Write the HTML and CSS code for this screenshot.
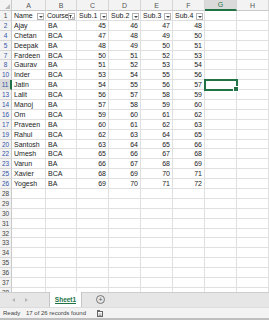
FILE: index.html
```html
<!DOCTYPE html>
<html lang="en">
<head>
    <meta charset="UTF-8">
    <meta name="viewport" content="width=device-width, initial-scale=1.0">
    <title>Sheet1</title>
    <link rel="stylesheet" href="styles.css">
</head>
<body>
    <div class="app">
        <div class="sheet">
            <div class="row">
                <div class="corner"></div>
                <div class="ch">A</div>
                <div class="ch">B</div>
                <div class="ch">C</div>
                <div class="ch">D</div>
                <div class="ch">E</div>
                <div class="ch">F</div>
                <div class="ch active">G</div>
                <div class="ch">H</div>
            </div>
            <div class="row">
                <div class="rh plain">1</div>
                <div class="c">Name<span class="dd"><i class="tri"></i></span></div>
                <div class="c tight">Course<span class="dd">
                    <svg width="6" height="6" viewBox="0 0 6 6"><path d="M0 0.5h3.6l-1.3 1.6v2.2l-1 0.6v-2.8z" fill="#333"/><path d="M3.6 3.6h2.2l-1.1 1.4z" fill="#333"/></svg>
                </span></div>
                <div class="c">Sub.1<span class="dd"><i class="tri"></i></span></div>
                <div class="c">Sub.2<span class="dd"><i class="tri"></i></span></div>
                <div class="c">Sub.3<span class="dd"><i class="tri"></i></span></div>
                <div class="c">Sub.4<span class="dd"><i class="tri"></i></span></div>
                <div class="c"></div>
                <div class="c"></div>
            </div>
            <div class="row">
                <div class="rh">2</div><div class="c">Ajay</div><div class="c">BA</div>
                <div class="c n">45</div><div class="c n">46</div><div class="c n">47</div><div class="c n">48</div>
                <div class="c"></div><div class="c"></div>
            </div>
            <div class="row">
                <div class="rh">4</div><div class="c">Chetan</div><div class="c">BCA</div>
                <div class="c n">47</div><div class="c n">48</div><div class="c n">49</div><div class="c n">50</div>
                <div class="c"></div><div class="c"></div>
            </div>
            <div class="row">
                <div class="rh">5</div><div class="c">Deepak</div><div class="c">BA</div>
                <div class="c n">48</div><div class="c n">49</div><div class="c n">50</div><div class="c n">51</div>
                <div class="c"></div><div class="c"></div>
            </div>
            <div class="row">
                <div class="rh">7</div><div class="c">Fardeen</div><div class="c">BCA</div>
                <div class="c n">50</div><div class="c n">51</div><div class="c n">52</div><div class="c n">53</div>
                <div class="c"></div><div class="c"></div>
            </div>
            <div class="row">
                <div class="rh">8</div><div class="c">Gaurav</div><div class="c">BA</div>
                <div class="c n">51</div><div class="c n">52</div><div class="c n">53</div><div class="c n">54</div>
                <div class="c"></div><div class="c"></div>
            </div>
            <div class="row">
                <div class="rh">10</div><div class="c">Inder</div><div class="c">BCA</div>
                <div class="c n">53</div><div class="c n">54</div><div class="c n">55</div><div class="c n">56</div>
                <div class="c"></div><div class="c"></div>
            </div>
            <div class="row">
                <div class="rh active">11</div><div class="c">Jatin</div><div class="c">BA</div>
                <div class="c n">54</div><div class="c n">55</div><div class="c n">56</div><div class="c n">57</div>
                <div class="c sel"></div><div class="c"></div>
            </div>
            <div class="row">
                <div class="rh">13</div><div class="c">Lalit</div><div class="c">BCA</div>
                <div class="c n">56</div><div class="c n">57</div><div class="c n">58</div><div class="c n">59</div>
                <div class="c"></div><div class="c"></div>
            </div>
            <div class="row">
                <div class="rh">14</div><div class="c">Manoj</div><div class="c">BA</div>
                <div class="c n">57</div><div class="c n">58</div><div class="c n">59</div><div class="c n">60</div>
                <div class="c"></div><div class="c"></div>
            </div>
            <div class="row">
                <div class="rh">16</div><div class="c">Om</div><div class="c">BCA</div>
                <div class="c n">59</div><div class="c n">60</div><div class="c n">61</div><div class="c n">62</div>
                <div class="c"></div><div class="c"></div>
            </div>
            <div class="row">
                <div class="rh">17</div><div class="c">Praveen</div><div class="c">BA</div>
                <div class="c n">60</div><div class="c n">61</div><div class="c n">62</div><div class="c n">63</div>
                <div class="c"></div><div class="c"></div>
            </div>
            <div class="row">
                <div class="rh">19</div><div class="c">Rahul</div><div class="c">BCA</div>
                <div class="c n">62</div><div class="c n">63</div><div class="c n">64</div><div class="c n">65</div>
                <div class="c"></div><div class="c"></div>
            </div>
            <div class="row">
                <div class="rh">20</div><div class="c">Santosh</div><div class="c">BA</div>
                <div class="c n">63</div><div class="c n">64</div><div class="c n">65</div><div class="c n">66</div>
                <div class="c"></div><div class="c"></div>
            </div>
            <div class="row">
                <div class="rh">22</div><div class="c">Umesh</div><div class="c">BCA</div>
                <div class="c n">65</div><div class="c n">66</div><div class="c n">67</div><div class="c n">68</div>
                <div class="c"></div><div class="c"></div>
            </div>
            <div class="row">
                <div class="rh">23</div><div class="c">Varun</div><div class="c">BA</div>
                <div class="c n">66</div><div class="c n">67</div><div class="c n">68</div><div class="c n">69</div>
                <div class="c"></div><div class="c"></div>
            </div>
            <div class="row">
                <div class="rh">25</div><div class="c">Xavier</div><div class="c">BCA</div>
                <div class="c n">68</div><div class="c n">69</div><div class="c n">70</div><div class="c n">71</div>
                <div class="c"></div><div class="c"></div>
            </div>
            <div class="row">
                <div class="rh">26</div><div class="c">Yogesh</div><div class="c">BA</div>
                <div class="c n">69</div><div class="c n">70</div><div class="c n">71</div><div class="c n">72</div>
                <div class="c"></div><div class="c"></div>
            </div>
            <div class="row">
                <div class="rh plain">28</div><div class="c"></div><div class="c"></div><div class="c"></div><div class="c"></div><div class="c"></div><div class="c"></div><div class="c"></div><div class="c"></div>
            </div>
            <div class="row">
                <div class="rh plain">29</div><div class="c"></div><div class="c"></div><div class="c"></div><div class="c"></div><div class="c"></div><div class="c"></div><div class="c"></div><div class="c"></div>
            </div>
            <div class="row">
                <div class="rh plain">30</div><div class="c"></div><div class="c"></div><div class="c"></div><div class="c"></div><div class="c"></div><div class="c"></div><div class="c"></div><div class="c"></div>
            </div>
            <div class="row">
                <div class="rh plain">31</div><div class="c"></div><div class="c"></div><div class="c"></div><div class="c"></div><div class="c"></div><div class="c"></div><div class="c"></div><div class="c"></div>
            </div>
            <div class="row">
                <div class="rh plain">32</div><div class="c"></div><div class="c"></div><div class="c"></div><div class="c"></div><div class="c"></div><div class="c"></div><div class="c"></div><div class="c"></div>
            </div>
            <div class="row">
                <div class="rh plain">33</div><div class="c"></div><div class="c"></div><div class="c"></div><div class="c"></div><div class="c"></div><div class="c"></div><div class="c"></div><div class="c"></div>
            </div>
            <div class="row">
                <div class="rh plain">34</div><div class="c"></div><div class="c"></div><div class="c"></div><div class="c"></div><div class="c"></div><div class="c"></div><div class="c"></div><div class="c"></div>
            </div>
            <div class="row">
                <div class="rh plain">35</div><div class="c"></div><div class="c"></div><div class="c"></div><div class="c"></div><div class="c"></div><div class="c"></div><div class="c"></div><div class="c"></div>
            </div>
            <div class="row">
                <div class="rh plain">36</div><div class="c"></div><div class="c"></div><div class="c"></div><div class="c"></div><div class="c"></div><div class="c"></div><div class="c"></div><div class="c"></div>
            </div>
            <div class="row">
                <div class="rh plain">37</div><div class="c"></div><div class="c"></div><div class="c"></div><div class="c"></div><div class="c"></div><div class="c"></div><div class="c"></div><div class="c"></div>
            </div>
            <div class="row">
                <div class="rh plain last">38</div><div class="c"></div><div class="c"></div><div class="c"></div><div class="c"></div><div class="c"></div><div class="c"></div><div class="c"></div><div class="c"></div>
            </div>
        </div>

        <div class="tabs">
            <div class="nav">
                <i class="arrow left"></i>
                <i class="arrow right"></i>
            </div>
            <div class="tab"><span>Sheet1</span></div>
            <div class="add">+</div>
        </div>

        <div class="status">
            <span class="ready">Ready</span>
            <span>17 of 26 records found</span>
            <svg class="macro" width="6" height="7" viewBox="0 0 6 7">
                <rect x="0.5" y="1.5" width="5" height="5" fill="#fff" stroke="#666"/>
                <rect x="0" y="0" width="3" height="2" fill="#666"/>
                <path d="M1.5 4h3M1.5 5.5h3" stroke="#999"/>
            </svg>
        </div>
    </div>
</body>
</html>
```

FILE: styles.css
```css
* {
    box-sizing: border-box;
}

html, body {
    margin: 0;
    padding: 0;
}

body {
    width: 269px;
    height: 320px;
    overflow: hidden;
    background-color: #fff;
    font-family: "Liberation Sans", Arial, sans-serif;
}

.app {
    display: flex;
    flex-direction: column;
    height: 320px;
}

/* grid */
.sheet {
    height: 292px;
    flex: none;
    overflow: hidden;
    display: grid;
    grid-template-columns: 12px 34px 31px 32px 32px 32px 32px 32px 32px;
    grid-template-rows: 11px;
    grid-auto-rows: 9.9px;
}

.row {
    display: contents;
}

.c {
    position: relative;
    display: flex;
    align-items: center;
    padding: 0 2px 0 2px;
    border-right: 1px solid #e0e0e0;
    border-bottom: 1px solid #e0e0e0;
    font-size: 7px;
    color: #222;
    white-space: nowrap;
    overflow: hidden;
}

.c.n {
    justify-content: flex-end;
}

.c.tight {
    padding-left: 1px;
    letter-spacing: -0.2px;
}

/* column + row headers */
.corner {
    position: relative;
    background-color: #f3f3f3;
    border-right: 1px solid #c9c9c9;
    border-bottom: 1px solid #c9c9c9;
}

.corner::after {
    content: "";
    position: absolute;
    right: 1px;
    bottom: 1px;
    border-left: 5px solid transparent;
    border-bottom: 5px solid #b9b9b9;
}

.ch {
    display: flex;
    align-items: center;
    justify-content: center;
    background-color: #f3f3f3;
    border-right: 1px solid #d6d6d6;
    border-bottom: 1px solid #c9c9c9;
    font-size: 7px;
    color: #555;
}

.ch.active {
    background-color: #dadada;
    color: #217346;
    border-bottom: 2px solid #217346;
}

.rh {
    display: flex;
    align-items: center;
    justify-content: center;
    background-color: #f3f3f3;
    border-right: 1px solid #c9c9c9;
    border-bottom: 1px solid #d6d6d6;
    font-size: 6.5px;
    color: #3555a8;
}

.rh.plain {
    color: #444;
}

.rh.last {
    align-items: flex-start;
    padding-top: 1px;
}

.rh.active {
    background-color: #dadada;
    border-right: 2px solid #217346;
}

/* filter buttons */
.dd {
    position: absolute;
    right: 1px;
    top: 2px;
    width: 7px;
    height: 7px;
    display: flex;
    align-items: center;
    justify-content: center;
    background-color: #fff;
    border: 1px solid #b3b3b3;
}

.tri {
    border-left: 2px solid transparent;
    border-right: 2px solid transparent;
    border-top: 2px solid #444;
}

/* active cell */
.c.sel {
    overflow: visible;
    z-index: 1;
    outline: 2px solid #217346;
    outline-offset: -1px;
}

.c.sel::after {
    content: "";
    position: absolute;
    right: -3px;
    bottom: -3px;
    width: 4px;
    height: 4px;
    background-color: #217346;
    border: 1px solid #fff;
}

/* sheet tabs */
.tabs {
    flex: none;
    height: 15px;
    display: flex;
    background-color: #e6e6e6;
    border-top: 1px solid #cdcdcd;
}

.nav {
    width: 50px;
    display: flex;
    align-items: center;
    gap: 10px;
    padding-left: 12px;
}

.arrow {
    border-top: 2px solid transparent;
    border-bottom: 2px solid transparent;
}

.arrow.left {
    border-right: 3px solid #b5b5b5;
}

.arrow.right {
    border-left: 3px solid #b5b5b5;
}

.tab {
    width: 31px;
    margin-top: -1px;
    display: flex;
    align-items: center;
    justify-content: center;
    background-color: #fff;
    box-shadow: 1px 0 0 #c6c6c6, -1px 0 0 #c6c6c6;
    color: #217346;
    font-size: 6.5px;
    font-weight: bold;
}

.tab span {
    border-bottom: 1px solid #217346;
    line-height: 7px;
    padding-top: 1px;
}

.add {
    width: 9px;
    height: 9px;
    margin: 2px 0 0 15px;
    border: 1px solid #777;
    border-radius: 50%;
    display: flex;
    align-items: center;
    justify-content: center;
    font-size: 7px;
    line-height: 7px;
    color: #555;
}

/* status bar */
.status {
    flex: none;
    height: 13px;
    display: flex;
    align-items: center;
    padding-left: 3px;
    background-color: #f3f3f3;
    border-top: 1px solid #dcdcdc;
    border-bottom: 2px solid #bfbfbf;
    font-size: 6px;
    color: #444;
}

.ready {
    width: 23px;
}

.macro {
    margin-left: 11px;
}
```
